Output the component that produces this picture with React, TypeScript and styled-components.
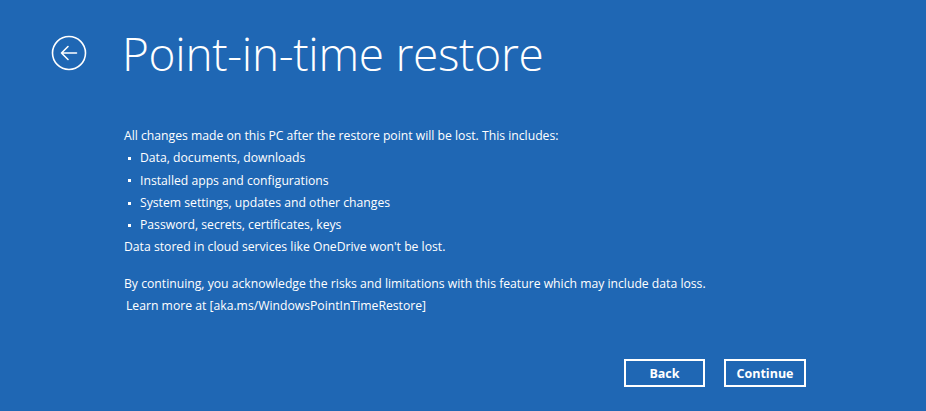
import styled, { createGlobalStyle } from 'styled-components';

const GlobalStyle = createGlobalStyle`
  html, body {
    margin: 0;
    padding: 0;
    background: #1f67b4;
  }
  * {
    box-sizing: border-box;
  }
`;

const Screen = styled.div`
  width: 926px;
  height: 411px;
  background: #1f67b4;
  color: #ffffff;
  font-family: 'Open Sans', 'Noto Sans', sans-serif;
  display: flex;
  flex-direction: column;
  padding: 22px 0 0 51px;
  overflow: hidden;
`;

const Header = styled.div`
  display: flex;
  align-items: center;
  gap: 35px;
`;

const BackArrow = styled.button`
  width: 36px;
  height: 36px;
  padding: 0;
  border: none;
  background: none;
  color: #ffffff;
  display: flex;
  align-items: center;
  justify-content: center;
  cursor: pointer;
`;

const Title = styled.h1`
  margin: 0;
  font-size: 46px;
  font-weight: 300;
  letter-spacing: -0.3px;
  line-height: 62px;
`;

const Body = styled.div`
  margin: 41px 0 0 73px;
  font-size: 12.2px;
  line-height: 22.3px;
`;

const Para = styled.p`
  margin: 0;
`;

const List = styled.ul`
  margin: 0;
  padding: 0;
  list-style: none;
`;

const Item = styled.li`
  display: flex;
  align-items: center;
  gap: 9px;
  padding-left: 4px;

  &::before {
    content: '';
    width: 3px;
    height: 3px;
    background: #ffffff;
  }
`;

const Notice = styled.p<{ $indent?: number }>`
  margin: 0;
  padding-left: ${({ $indent }) => $indent ?? 0}px;
`;

const Gap = styled.div`
  height: 14px;
`;

const Footer = styled.div`
  margin-top: auto;
  display: flex;
  justify-content: flex-end;
  gap: 19px;
  padding: 0 120px 24px 0;
`;

const Button = styled.button<{ $width: number }>`
  width: ${({ $width }) => $width}px;
  height: 28px;
  border: 2px solid #ffffff;
  background: transparent;
  color: #ffffff;
  font-family: 'Open Sans', 'Noto Sans', sans-serif;
  font-size: 12.5px;
  font-weight: 700;
  cursor: pointer;
`;

const items = [
  'Data, documents, downloads',
  'Installed apps and configurations',
  'System settings, updates and other changes',
  'Password, secrets, certificates, keys',
];

export default function App() {
  return (
    <>
      <GlobalStyle />
      <Screen>
        <Header>
          <BackArrow aria-label="Back">
            <svg width="36" height="36" viewBox="0 0 36 36" fill="none" stroke="currentColor" strokeWidth="1.6">
              <circle cx="18" cy="18" r="16.5" />
              <path d="M10.5 18h15M17 11.5 10.5 18l6.5 6.5" strokeLinecap="round" strokeLinejoin="round" />
            </svg>
          </BackArrow>
          <Title>Point-in-time restore</Title>
        </Header>
        <Body>
          <Para>All changes made on this PC after the restore point will be lost. This includes:</Para>
          <List>
            {items.map((text) => (
              <Item key={text}>{text}</Item>
            ))}
          </List>
          <Para>Data stored in cloud services like OneDrive won't be lost.</Para>
          <Gap />
          <Notice>By continuing, you acknowledge the risks and limitations with this feature which may include data loss.</Notice>
          <Notice $indent={2}>Learn more at [aka.ms/WindowsPointInTimeRestore]</Notice>
        </Body>
        <Footer>
          <Button $width={81}>Back</Button>
          <Button $width={82}>Continue</Button>
        </Footer>
      </Screen>
    </>
  );
}
